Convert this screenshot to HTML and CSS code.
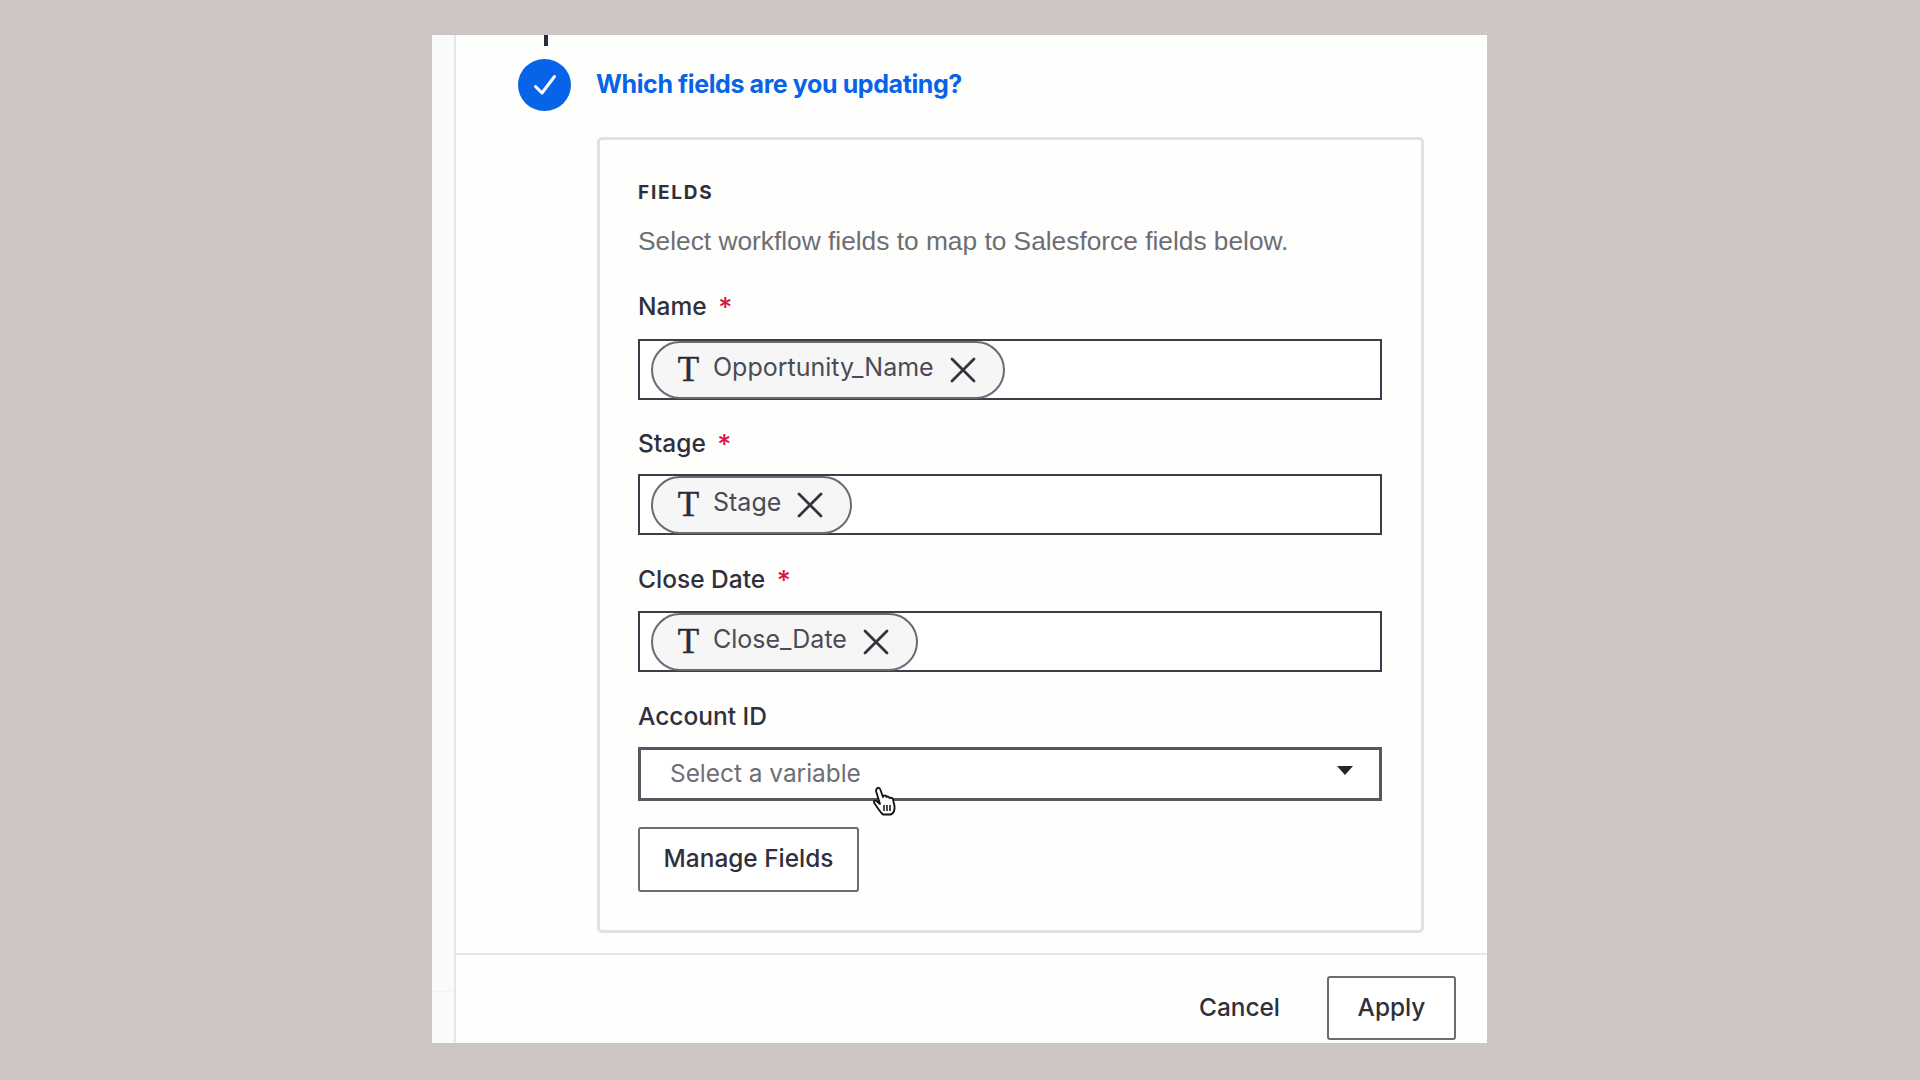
FILE: index.html
```html
<!DOCTYPE html>
<html lang="en">
<head>
<meta charset="utf-8">
<title>Which fields are you updating?</title>
<link rel="stylesheet" href="styles.css">
</head>
<body>
<div class="panel">
  <div class="strip"><div class="strip-top"></div><div class="strip-bottom"></div></div>
  <div class="main">
    <div class="content">
      <div class="connector"></div>
      <div class="step-head">
        <div class="step-circle">
          <svg width="24" height="22" viewBox="0 0 24 22"><path d="M2.5 12.5 L9 19 L21.5 2.5" fill="none" stroke="#fff" stroke-width="3" stroke-linecap="round" stroke-linejoin="round"/></svg>
        </div>
        <div class="step-title">Which fields are you updating?</div>
      </div>
      <section class="card">
        <h2 class="card-title">FIELDS</h2>
        <p class="card-desc">Select workflow fields to map to Salesforce fields below.</p>
        <div class="field field-first">
          <label class="label">Name <span class="req">*</span></label>
          <div class="token-input">
            <div class="chip">
              <span class="chip-type">T</span><span class="chip-text">Opportunity_Name</span>
              <svg class="chip-x" width="26" height="26" viewBox="0 0 26 26"><path d="M2 2 L24 24 M24 2 L2 24" fill="none" stroke="#33343e" stroke-width="2.8" stroke-linecap="round"/></svg>
            </div>
          </div>
        </div>
        <div class="field field-stage">
          <label class="label">Stage <span class="req">*</span></label>
          <div class="token-input">
            <div class="chip">
              <span class="chip-type">T</span><span class="chip-text">Stage</span>
              <svg class="chip-x" width="26" height="26" viewBox="0 0 26 26"><path d="M2 2 L24 24 M24 2 L2 24" fill="none" stroke="#33343e" stroke-width="2.8" stroke-linecap="round"/></svg>
            </div>
          </div>
        </div>
        <div class="field field-date">
          <label class="label">Close Date <span class="req">*</span></label>
          <div class="token-input">
            <div class="chip">
              <span class="chip-type">T</span><span class="chip-text">Close_Date</span>
              <svg class="chip-x" width="26" height="26" viewBox="0 0 26 26"><path d="M2 2 L24 24 M24 2 L2 24" fill="none" stroke="#33343e" stroke-width="2.8" stroke-linecap="round"/></svg>
            </div>
          </div>
        </div>
        <div class="field field-account">
          <label class="label">Account ID</label>
          <div class="select">
            <span class="placeholder">Select a variable</span>
            <span class="caret"></span>
            <svg class="cursor" width="26" height="30" viewBox="0 0 26 30"><path d="M5 2.5 C6.5 1 8 2 8.5 4 L11 11 L12 9.5 C13 9 14 9.5 14.5 11 C15.5 10 17 10.5 17.5 12 C19 11.5 20.5 12 21 13.5 L22.5 20 C23 24 21.5 27 19 28.5 L11 28.5 C9 27 7 24 5 21 L2 16.5 C1.5 15 3 14 4.5 15 L8 18 L4 5 C4 4 4.4 3 5 2.5 Z" fill="#fff" stroke="#111" stroke-width="1.8" stroke-linejoin="round"/><path d="M12 19 V25 M15 19 V25 M18 19 V25" stroke="#111" stroke-width="1.5"/></svg>
          </div>
        </div>
        <button class="btn btn-manage" type="button">Manage Fields</button>
      </section>
    </div>
    <footer class="footer">
      <button class="btn-plain" type="button">Cancel</button>
      <button class="btn btn-apply" type="button">Apply</button>
    </footer>
  </div>
</div>
</body>
</html>
```
FILE: styles.css
```css
* { box-sizing: border-box; }
html, body { margin: 0; height: 100%; }
body {
  height: 1080px;
  overflow: hidden;
  background: #cdc5c4;
  padding: 35px 0 37px 432px;
  font-family: "Inter", "Liberation Sans", sans-serif;
  color: #2f303b;
}
.panel {
  width: 1055px;
  height: 1008px;
  display: flex;
  background: #fefefd;
}
.strip {
  width: 24px;
  flex: none;
  background: #fafafd;
  border-right: 2px solid #e6e6ea;
  display: flex;
  flex-direction: column;
}
.strip-top { height: 957px; border-bottom: 1px solid #f3f3f5; }
.strip-bottom { flex: 1; }
.main { flex: 1; display: flex; flex-direction: column; min-width: 0; }
.content { flex: 1; padding-left: 62px; }
.connector { width: 4px; height: 11px; margin-left: 26px; background: #2b2c36; }
.step-head { display: flex; align-items: center; gap: 25px; margin-top: 13px; }
.step-circle {
  width: 53px;
  height: 52px;
  border-radius: 50%;
  background: #0763e8;
  display: flex;
  align-items: center;
  justify-content: center;
  flex: none;
}
.step-title {
  font-size: 25px;
  line-height: 32px;
  font-weight: 700;
  color: #0763e8;
  margin-top: -3px;
  letter-spacing: -0.4px;
}
.card {
  width: 827px;
  margin: 26px 0 0 79px;
  padding: 42px 39px 38px 38px;
  border: 3px solid #e0e0e5;
  border-radius: 5px;
}
.card-title {
  margin: 0;
  font-size: 19px;
  line-height: 22px;
  font-weight: 700;
  letter-spacing: 1.75px;
}
.card-desc {
  margin: 22px 0 0;
  font-family: "Liberation Sans", Arial, sans-serif;
  font-size: 26.3px;
  line-height: 30px;
  color: #6d6e75;
}
.field { margin-top: 27px; }
.field-first { margin-top: 34px; }
.field-date { margin-top: 28px; }
.field-account { margin-top: 28px; }
.label {
  display: block;
  font-size: 24.5px;
  line-height: 32px;
  font-weight: 500;
  margin-bottom: 16px;
}
.field-first .label { margin-bottom: 17px; }
.field-stage .label { margin-bottom: 15px; }
.field-account .label { margin-bottom: 15px; }
.req {
  color: #d9144f;
  margin-left: 5px;
  font-size: 27px;
  line-height: 24px;
  font-weight: 500;
  position: relative;
  top: 2px;
}
.token-input {
  height: 61px;
  border: 2px solid #3c3d48;
  padding: 0 0 0 11px;
  display: flex;
  align-items: center;
  background: #fff;
}
.chip {
  height: 58px;
  flex: none;
  display: flex;
  align-items: center;
  padding: 0 27px 0 24px;
  border: 2px solid #6a6b73;
  border-radius: 29px;
  background: #f6f6f6;
}
.chip-type {
  font-family: "Liberation Serif", serif;
  font-size: 35px;
  line-height: 34px;
  width: 23px;
  color: #2b2c36;
  text-align: center;
  -webkit-text-stroke: 0.5px #2b2c36;
}
.chip-text {
  margin-left: 13px;
  font-size: 25px;
  line-height: 30px;
  color: #4a4b55;
  margin-top: -5px;
}
.chip-x { margin-left: 16px; flex: none; }
.select {
  position: relative;
  height: 54px;
  border: 3px solid #55565f;
  display: flex;
  align-items: center;
  justify-content: space-between;
  padding: 0 26px 0 29px;
  background: #fff;
}
.placeholder { font-size: 24.4px; color: #6d6e75; margin-top: -2px; }
.caret {
  width: 0;
  height: 0;
  border-left: 8px solid transparent;
  border-right: 8px solid transparent;
  border-top: 9px solid #23242e;
  margin-top: -8px;
}
.cursor { position: absolute; left: 231px; top: 36px; }
.btn {
  display: block;
  font: inherit;
  color: #2f303b;
  background: #fff;
  border: 2px solid #6a6b73;
  border-radius: 3px;
}
.btn-manage {
  width: 221px;
  height: 65px;
  margin-top: 26px;
  font-size: 24.4px;
  font-weight: 500;
  padding: 0 0 4px;
}
.footer {
  height: 90px;
  flex: none;
  border-top: 2px solid #e6e6ea;
  display: flex;
  justify-content: flex-end;
  align-items: flex-start;
  padding: 21px 31px 0 0;
  gap: 47px;
}
.btn-plain {
  height: 64px;
  padding: 0 0 2px;
  border: 0;
  background: none;
  font: inherit;
  font-size: 24.4px;
  font-weight: 500;
  color: #2f303b;
}
.btn-apply {
  width: 129px;
  height: 64px;
  font-size: 24.4px;
  font-weight: 500;
  padding: 0 0 2px;
}
```
